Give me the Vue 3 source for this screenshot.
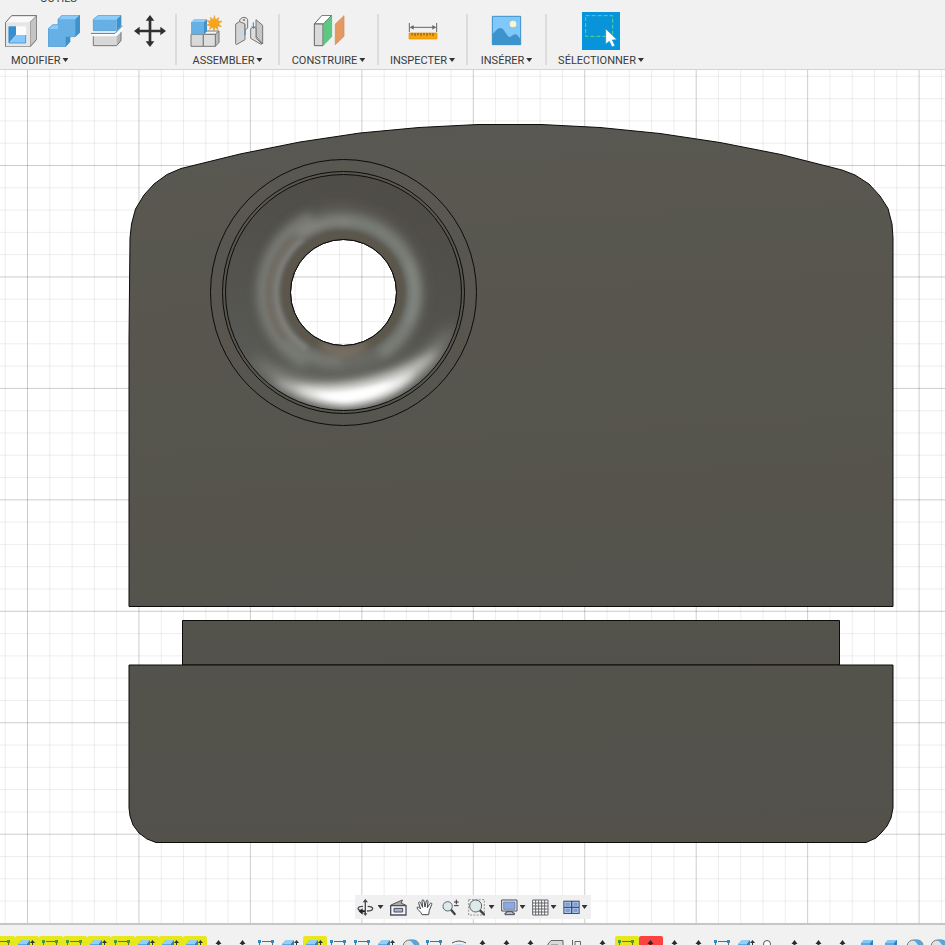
<script setup>
const step = 22.29
const gridX = Array.from({ length: 160 }, (_, i) => {
  const n = i - 60
  return { at: 27.5 + n * step, major: n % 5 === 0 }
})
const gridY = Array.from({ length: 100 }, (_, i) => {
  const n = i - 30
  return { at: 165.5 + n * step, major: n % 5 === 0 }
})

const body =
  'M129 606.500V340L130 238L131.500 224L135.500 209L144 195L154 184L167 174.500L181 168.500L240 154L300 142L360 133L419 127.500L478 124.500H541L600 127.500L660 133.500L720 142.500L781 154.500L842 170L855 175L869 184L880 196L888 208.500L892 224L893 238V606.500Z'
const hole = 'M290.500 292.500a53 53 0 1 0 106 0a53 53 0 1 0 -106 0Z'
const dish = 'M225.500 292.500a118 118 0 1 0 236 0a118 118 0 1 0 -236 0Z'

const y = (kind) => ({ kind, tone: 'warn' })
const p = (kind) => ({ kind, tone: '' })
const history = [
  y('sketch'), y('extrude'), y('sketch'), y('sketch'), y('extrude'), y('sketch'), y('extrude'), y('extrude'), y('extrude'),
  p('move'), p('move'), p('sketch'), p('extrude'), y('extrude'), p('sketch'), p('sketch'), p('extrude'), p('fillet'),
  p('sketch'), p('revolve'), p('move'), p('move'), p('move'), p('shell'), p('align'), p('move'),
  y('sketch'), { kind: 'move', tone: 'error' }, p('move'), p('move'), p('sketch'), p('extrude'), p('joint'), p('move'),
  p('move'), p('move'), p('box'), p('box'), p('fillet'), p('fillet')
]
const names = {
  sketch: 'Esquisse', extrude: 'Extrusion', move: 'Déplacer', fillet: 'Congé', revolve: 'Révolution',
  shell: 'Coque', align: 'Aligner', joint: 'Liaison', box: 'Corps'
}
</script>

<template>
  <div class="app">
    <header class="ribbon">
      <nav class="tabs"><a href="#outils">OUTILS</a></nav>
      <div class="tools">
        <section class="group first">
          <div class="icons">
            <button aria-label="Coque">
              <svg class="ico" viewBox="0 0 96 96">
                <path d="M2 22L20 2H95V73L75 95H2Z" fill="#fafafa" stroke="#666" stroke-width="3" />
                <path d="M75 22L95 2V73L75 95Z" fill="#c4c4c4" stroke="#666" stroke-width="2" />
                <path d="M3 22H75V94H3Z" fill="#e6e6e6" />
                <path d="M11 34H63V85H11Z" fill="#fbfbfb" />
                <path d="M11 34H33V60L11 85Z" fill="#378fcd" />
                <path d="M11 85L33 60H63V85Z" fill="#87c7fb" />
                <path d="M12 35V84H62V60" fill="none" stroke="#3186c4" stroke-width="2" />
              </svg>
            </button>
            <button aria-label="Combiner">
              <svg class="ico" viewBox="0 0 96 96">
                <path d="M0 42L14 29H30V13L43 0H96V52L82 65H66V80L53 95H0Z" fill="#67b0e6" />
                <path d="M0 42L14 29H30V42ZM30 13L43 0H96L82 13Z" fill="#88cbf9" />
                <path d="M82 13L96 0V52L82 65ZM53 65H66V80L53 95Z" fill="#3f91c9" />
                <path d="M0 42L14 29H30V13L43 0H96V52L82 65H66V80L53 95H0Z" fill="none" stroke="#4a96cb" stroke-width="2" />
              </svg>
            </button>
            <button aria-label="Scinder le corps">
              <svg class="ico" viewBox="0 0 96 96">
                <path d="M7 64H77V92H7Z" fill="#d8d8d8" />
                <path d="M77 64L90 50V77L77 92Z" fill="#b4b4b4" />
                <path d="M7 64V92H77L90 77V50" fill="none" stroke="#777" stroke-width="3" />
                <path d="M0 52L6 62H78L96 44V30L72 50Z" fill="#fff" />
                <path d="M7 13L22 1H90L77 13Z" fill="#8bccf8" />
                <path d="M7 13H77V47H7Z" fill="#67b0e6" />
                <path d="M77 13L90 1V33L77 47Z" fill="#3f91c9" />
                <path d="M7 13L22 1H90V33L77 47H7Z" fill="none" stroke="#4191c8" stroke-width="2" />
                <path d="M0 55H72L95 32" fill="none" stroke="#1683cb" stroke-width="3" />
              </svg>
            </button>
            <button aria-label="Déplacer">
              <svg class="ico" viewBox="0 0 96 96">
                <path d="M48 0L61 17H52V44H79V35L96 48L79 61V52H52V79H61L48 96L35 79H44V52H17V61L0 48L17 35V44H44V17H35Z" fill="#303030" />
              </svg>
            </button>
          </div>
          <button class="menu">MODIFIER<i class="caret"></i></button>
        </section>

        <section class="group">
          <div class="icons">
            <button aria-label="Nouveau composant">
              <svg class="ico" viewBox="0 0 96 96">
                <path d="M3 58H40V94H3Z" fill="#d9d9d9" stroke="#777" stroke-width="3" />
                <path d="M40 58L50 48H87L76 58Z" fill="#f7f7f7" stroke="#777" stroke-width="3" />
                <path d="M76 58L87 48V82L76 94Z" fill="#bcbcbc" stroke="#777" stroke-width="3" />
                <path d="M40 58H76V94H40Z" fill="#dedede" stroke="#777" stroke-width="3" />
                <path d="M3 21H42V58H3Z" fill="#67b0e6" />
                <path d="M3 21L13 12H51L42 21Z" fill="#8bccf8" />
                <path d="M42 21L51 12V48L42 58Z" fill="#3f91c9" />
                <path d="M73 1L77 14L87 7L84 18L97 19L86 26L95 35L83 33L84 46L76 37L71 49L68 36L58 44L61 32L48 32L59 25L49 16L62 18L61 6L70 14Z" fill="#f7a41a" stroke="#e39414" stroke-width="1" />
              </svg>
            </button>
            <button aria-label="Liaison">
              <svg class="ico" viewBox="0 0 96 96">
                <path d="M8 27L24 17L36 27V74L10 89L8 86Z" fill="#d4d4d4" stroke="#777" stroke-width="3" />
                <path d="M20 20V15Q24 7 33 7Q42 7 44 14V39L36 45V27Z" fill="#e4e4e4" stroke="#777" stroke-width="3" />
                <circle cx="33" cy="15" r="3" fill="#777" />
                <path d="M36 46V60" stroke="#2b86c4" stroke-width="3" />
                <path d="M89 87V31L69 14V63Z" fill="#c6c6c6" stroke="#777" stroke-width="3" />
                <path d="M53 41Q61 32 69 39V69L87 87L82 87L53 70Z" fill="#dddddd" stroke="#777" stroke-width="3" />
                <path d="M61 22V38M56 34L61 40L66 34" fill="none" stroke="#2b86c4" stroke-width="3" />
              </svg>
            </button>
          </div>
          <button class="menu">ASSEMBLER<i class="caret"></i></button>
        </section>

        <section class="group">
          <div class="icons">
            <button aria-label="Plan décalé">
              <svg class="ico" viewBox="0 0 96 96">
                <path d="M4 27L27 1H56L31 27Z" fill="#fff" stroke="#666" stroke-width="3" />
                <path d="M4 27H30V92H4Z" fill="#dadada" stroke="#666" stroke-width="3" />
                <path d="M31 27L56 3V65L31 91Z" fill="#5cc881" stroke="#43b56c" stroke-width="2" />
                <path d="M67 27L93 2V64L67 89Z" fill="#e69863" stroke="#d68450" stroke-width="2" />
              </svg>
            </button>
          </div>
          <button class="menu">CONSTRUIRE<i class="caret"></i></button>
        </section>

        <section class="group">
          <div class="icons">
            <button aria-label="Mesurer">
              <svg class="ico" viewBox="0 0 96 96">
                <path d="M7 24V51M89 24V51M10 37H86" stroke="#666" stroke-width="3" />
                <path d="M9 37L20 30V44ZM87 37L76 30V44Z" fill="#666" />
                <path d="M6 54H90V72H6Z" fill="#f8a50d" stroke="#de910a" stroke-width="2" />
                <path d="M15 54V61M24 54V63M33 54V61M42 54V63M51 54V61M60 54V63M69 54V61M78 54V63" stroke="#725322" stroke-width="3" />
              </svg>
            </button>
          </div>
          <button class="menu">INSPECTER<i class="caret"></i></button>
        </section>

        <section class="group">
          <div class="icons">
            <button aria-label="Insérer une image">
              <svg class="ico" viewBox="0 0 96 96">
                <path d="M4 4H89V89H4Z" fill="#80c7fb" />
                <path d="M4 58C13 50 19 38 29 39C41 41 45 62 55 66C63 65 67 56 74 58C81 60 84 69 89 72V89H4Z" fill="#3d94cc" />
                <circle cx="66" cy="27" r="10" fill="#fdf6c5" />
                <path d="M4 4H89V89H4Z" fill="none" stroke="#3d91c8" stroke-width="3" />
              </svg>
            </button>
          </div>
          <button class="menu">INSÉRER<i class="caret"></i></button>
        </section>

        <section class="group last">
          <div class="icons">
            <button class="active" aria-label="Sélection par fenêtre">
              <svg class="ico-large" viewBox="0 0 114 114">
                <path d="M11 11H92V73H11Z" fill="none" stroke="#58d68a" stroke-width="3" stroke-dasharray="12 6" />
                <path d="M71 50L105 83L91 84L99 101L90 105L82 88L71 97Z" fill="#fff" stroke="#0794da" stroke-width="2" />
              </svg>
            </button>
          </div>
          <button class="menu">SÉLECTIONNER<i class="caret"></i></button>
        </section>
      </div>
    </header>

    <main class="viewport">
      <svg class="scene" viewBox="0 70 945 853" preserveAspectRatio="xMidYMin slice" role="img" aria-label="Modèle, vue de face">
        <defs>
          <linearGradient id="metal" x1="0" y1="0" x2="0.08" y2="1">
            <stop offset="0" stop-color="#585852" />
            <stop offset="0.16" stop-color="#595750" />
            <stop offset="0.3" stop-color="#57564f" />
            <stop offset="0.5" stop-color="#57554e" />
            <stop offset="0.65" stop-color="#56554e" />
            <stop offset="0.85" stop-color="#55534c" />
            <stop offset="1" stop-color="#54534d" />
          </linearGradient>
          <linearGradient id="metal-low" x1="0" y1="0" x2="0.1" y2="1">
            <stop offset="0" stop-color="#54524c" />
            <stop offset="0.5" stop-color="#53524b" />
            <stop offset="1" stop-color="#54514b" />
          </linearGradient>
          <linearGradient id="dish-base" x1="0.7" y1="0" x2="0.35" y2="1">
            <stop offset="0" stop-color="#4f4c46" />
            <stop offset="0.45" stop-color="#52514c" />
            <stop offset="1" stop-color="#5a5b57" />
          </linearGradient>
          <clipPath id="dish-clip"><path :d="dish + hole" clip-rule="evenodd" /></clipPath>
          <filter id="b2" filterUnits="userSpaceOnUse" x="200" y="150" width="290" height="290"><feGaussianBlur stdDeviation="2" /></filter>
          <filter id="b4" filterUnits="userSpaceOnUse" x="200" y="150" width="290" height="290"><feGaussianBlur stdDeviation="4" /></filter>
          <filter id="b7" filterUnits="userSpaceOnUse" x="200" y="150" width="290" height="290"><feGaussianBlur stdDeviation="7" /></filter>
        </defs>

        <g class="grid">
          <line v-for="g in gridX" :key="'x' + g.at" :class="{ major: g.major }" :x1="g.at" :x2="g.at" y1="-500" y2="2000" />
          <line v-for="g in gridY" :key="'y' + g.at" :class="{ major: g.major }" x1="-1300" x2="2200" :y1="g.at" :y2="g.at" />
        </g>

        <path :d="body + hole" fill="url(#metal)" fill-rule="evenodd" class="edge" />

        <g clip-path="url(#dish-clip)">
          <path :d="dish" fill="url(#dish-base)" />
          <g fill="none">
            <circle cx="341" cy="291" r="73" stroke="#6c6d67" stroke-width="16" filter="url(#b7)" />
            <g filter="url(#b4)">
              <path d="M312 218A81 81 0 0 0 306 363" stroke="#777973" stroke-width="13" />
              <path d="M342 222A71 71 0 0 1 380 354" stroke="#7b7f79" stroke-width="11" />
              <path d="M270 317A76 76 0 0 0 342 361" stroke="#777973" stroke-width="10" />
              <path d="M300 236A70 70 0 0 1 350 222" stroke="#878781" stroke-width="9" />
              <path d="M408 262A71 71 0 0 1 408 322" stroke="#858b85" stroke-width="8" />
            </g>
            <g filter="url(#b2)">
              <path d="M292 238A75 75 0 0 0 285 340" stroke="#716b61" stroke-width="5" />
              <path d="M303 239A67 67 0 0 0 307 349" stroke="#84837d" stroke-width="5" />
              <circle cx="343.5" cy="292.500" r="57" stroke="#5d574c" stroke-width="8" />
            </g>
            <path d="M321 344Q343 356 366 344L359 350Q343 358 328 350Z" fill="#82786b" stroke="#7d7366" stroke-width="6" filter="url(#b4)" />
          </g>
          <path d="M250 355Q300 384 345 383Q410 376 455 322Q436 391 345 408Q280 403 250 355Z" fill="#84847f" filter="url(#b7)" />
          <path d="M272 379Q350 398 440 349Q403 402 345 405Q300 403 272 379Z" fill="#b9b9b6" filter="url(#b4)" />
          <path d="M294 388Q352 397 416 371Q391 401 345 404Q316 402 294 388Z" fill="#ffffff" filter="url(#b4)" />
          <path d="M316 394Q350 395 392 382Q374 398 345 401Q328 400 316 394Z" fill="#ffffff" filter="url(#b2)" />
        </g>
        <g class="outline">
          <circle cx="343.5" cy="292.500" r="133" />
          <circle cx="343.5" cy="292.500" r="121" />
          <circle cx="343.5" cy="292.500" r="118" />
          <circle cx="343.5" cy="292.500" r="53" />
        </g>

        <path d="M182.500 620.500H839.500V665H182.500Z" fill="url(#metal-low)" class="edge" />
        <path d="M129 665H893V808L891 818L887 826L882 832L876 838L866 842.500H156L147 839L139 833L133 825L130 816L129 808Z" fill="url(#metal-low)" class="edge" />
      </svg>

      <nav class="navbar" aria-label="Navigation">
        <button aria-label="Orbite">
          <svg viewBox="0 0 51 51">
            <path d="M25 3V48" stroke="#454850" stroke-width="4" />
            <path d="M25 0L33 10H17ZM25 51L19 43H31Z" fill="#454850" />
            <path d="M15 36C-2 33 0 22 18 22M32 22C54 23 50 36 30 36" fill="none" stroke="#454850" stroke-width="4" />
            <path d="M5 37L17 28V34H24V40H17V47Z" fill="#222" />
          </svg><i class="caret"></i>
        </button>
        <button class="plain" aria-label="Regarder">
          <svg viewBox="0 0 51 51">
            <path d="M3 18L37 3L34 13L47 18" fill="#aaa" stroke="#555" stroke-width="3" />
            <path d="M2 20H48V48H2Z" fill="#f6f6f8" stroke="#4b5060" stroke-width="4" />
            <path d="M12 28H38V39H12Z" fill="#aab1c4" stroke="#4b5060" stroke-width="3" />
          </svg>
        </button>
        <button class="plain" aria-label="Panoramique">
          <svg viewBox="0 0 51 51">
            <path d="M18 47C15 38 5 33 3 27C3 23 8 23 14 30L8 13C7 8 12 7 14 12L20 25L18 6C18 1 23 1 24 6L27 24L31 6C32 2 37 3 36 8L34 26L42 14C45 10 49 13 47 17L40 34L38 47Z" fill="#fff" stroke="#44474e" stroke-width="3" stroke-linejoin="round" />
          </svg>
        </button>
        <button class="plain" aria-label="Zoom">
          <svg viewBox="0 0 51 51">
            <path d="M26 31L38 45" stroke="#3e4147" stroke-width="7" stroke-linecap="round" />
            <circle cx="17" cy="22" r="14" fill="#dceaeb" stroke="#62656b" stroke-width="3" />
            <path d="M36 9H50M43 2V16M36 20H50" stroke="#333" stroke-width="3" />
          </svg>
        </button>
        <button aria-label="Zoom fenêtre">
          <svg viewBox="0 0 51 51">
            <path d="M2 2H49V48H2Z" fill="none" stroke="#666" stroke-width="2" stroke-dasharray="6 4" />
            <path d="M36 34L48 46" stroke="#3e4147" stroke-width="7" stroke-linecap="round" />
            <circle cx="23" cy="21" r="18" fill="#dceaea" stroke="#5f6268" stroke-width="3" />
          </svg><i class="caret"></i>
        </button>
        <button class="tight" aria-label="Paramètres d'affichage">
          <svg viewBox="0 0 51 51">
            <path d="M2 3H48V36H2Z" fill="#eef1f6" stroke="#454b5a" stroke-width="3" />
            <path d="M8 9H42V31H8Z" fill="#8daadf" stroke="#536a9c" stroke-width="2" />
            <path d="M16 38H35V42H40V47H12V42H16Z" fill="#bbc0c8" stroke="#454b5a" stroke-width="3" />
          </svg><i class="caret"></i>
        </button>
        <button class="tight" aria-label="Grille et magnétismes">
          <svg viewBox="0 0 51 51">
            <path d="M2 3H48V48H2Z" fill="#fff" />
            <path d="M2 3H48V48H2ZM11 3V48M20 3V48M29 3V48M38 3V48M2 12H48M2 21H48M2 30H48M2 39H48" fill="none" stroke="#62646a" stroke-width="3" />
          </svg><i class="caret"></i>
        </button>
        <button class="tight" aria-label="Fenêtres">
          <svg viewBox="0 0 51 51">
            <path d="M1 5H50V45H1Z" fill="#42506f" />
            <path d="M4 8H24V23H4ZM28 8H47V23H28ZM4 27H24V42H4ZM28 27H47V42H28Z" fill="#aac4ef" />
            <path d="M9 13H19V19H9ZM33 13H42V19H33ZM9 31H19V37H9ZM33 31H42V37H33Z" fill="#8caee3" stroke="#6c87b9" stroke-width="2" />
          </svg><i class="caret"></i>
        </button>
      </nav>
    </main>

    <footer class="timeline">
      <button v-for="(item, i) in history" :key="i" class="step" :class="item.tone" :aria-label="names[item.kind]">
        <svg viewBox="0 0 24 24">
          <template v-if="item.kind === 'sketch'">
            <path d="M7 5.500H16M4.500 7V17M17.500 7V17M7 18.500H16" stroke="#666" />
            <path d="M3 4h3v3H3zM16 4h3v3h-3zM3 17h3v3H3zM16 17h3v3h-3z" :fill="item.tone ? '#4a9a35' : '#3489bd'" />
          </template>
          <template v-else-if="item.kind === 'extrude'">
            <path d="M3 8L7 4H15L14 8V18H3Z" fill="#5baae2" />
            <path d="M3 8L7 4H15L12 8Z" fill="#93cff6" />
            <path d="M12 8L15 4V15L12 18Z" fill="#3181bd" />
            <path d="M17.500 6V18" stroke="#333" />
            <path d="M17.500 4L20 7H15Z" fill="#333" />
          </template>
          <template v-else-if="item.kind === 'box'">
            <path d="M6 7L9 4H18V16L15 19H6Z" fill="#5baae2" />
            <path d="M6 7L9 4H18L15 7Z" fill="#85c7f4" />
            <path d="M15 7L18 4V16L15 19Z" fill="#3181bd" />
          </template>
          <template v-else-if="item.kind === 'move'">
            <path d="M11.500 4L14.500 8H12.500V11H16V9L20 12L16 15V13H12.500V16H14.500L11.500 20L8.500 16H10.500V13H7V15L3 12L7 9V11H10.500V8H8.500Z" fill="#292929" />
          </template>
          <template v-else-if="item.kind === 'fillet'">
            <path d="M4 18V10Q5 4 11 4H15Q20 5 20 10V17L17 20H4Z" fill="#e2e2e2" stroke="#777" />
            <path d="M10 4H15Q20 5 20 11L16 14Q16 7 10 4Z" fill="#56a5dc" />
          </template>
          <template v-else-if="item.kind === 'revolve'">
            <path d="M4 10Q12 6 20 10V18H4Z" fill="#b8daf2" />
            <path d="M5 7Q12 3 19 7" fill="none" stroke="#555" />
          </template>
          <template v-else-if="item.kind === 'shell'">
            <path d="M5 8L8 4.500H20V15L16 19H5Z" fill="#d8d8d8" stroke="#666" />
            <path d="M8 9H15V16H8Z" fill="#fff" stroke="#777" />
          </template>
          <template v-else-if="item.kind === 'align'">
            <path d="M5.500 4V20M8 5.500H13.500V11H8Z" fill="none" stroke="#666" />
          </template>
          <template v-else>
            <circle cx="8" cy="8" r="3.500" fill="#fff" stroke="#555" />
            <path d="M8 12V20" stroke="#555" />
          </template>
        </svg>
      </button>
    </footer>
  </div>
</template>

<style>
body {
  margin: 0;
  overflow: hidden;
}
</style>

<style scoped>
.app {
  display: flex;
  flex-direction: column;
  height: 100vh;
  overflow: hidden;
  background: #fff;
  font-family: Roboto, "Liberation Sans", sans-serif;
  font-size: 11px;
  line-height: 12px;
  color: #3a3a3a;
}
button {
  display: flex;
  align-items: center;
  margin: 0;
  padding: 0;
  border: 0;
  background: none;
  color: inherit;
  font: inherit;
}
svg {
  display: block;
}
.ribbon {
  flex: none;
  overflow: hidden;
  background: #f1f1f1;
  border-bottom: 1px solid #d4d4d4;
}
.tabs {
  height: 12px;
  margin-top: -7px;
  padding-left: 40px;
}
.tabs a {
  display: block;
  color: inherit;
  text-decoration: none;
}
.tools {
  display: grid;
  grid-template-columns: 177px 103px 99px 89px 79px 108px;
}
.group {
  position: relative;
  display: flex;
  flex-direction: column;
  align-items: center;
  gap: 5px;
  padding: 7px 2px 2px 0;
}
.group::after {
  content: "";
  position: absolute;
  top: 9px;
  right: 0;
  bottom: 4px;
  width: 2px;
  background: #dcdcdc;
}
.group.last {
  padding-right: 0;
}
.group.last::after {
  display: none;
}
.group.first {
  align-items: flex-start;
  padding-left: 5px;
}
.group.first .menu {
  margin-left: 6px;
}
.icons {
  display: flex;
  align-items: center;
  gap: 11px;
  height: 38px;
}
.ico {
  width: 32px;
  height: 32px;
}
.ico-large {
  width: 38px;
  height: 38px;
}
.active {
  background: #0794da;
}
.menu {
  gap: 2px;
  white-space: nowrap;
}
.caret {
  flex: none;
  width: 6px;
  height: 4px;
  background: #333;
  clip-path: polygon(0 0, 100% 0, 50% 100%);
}
.menu .caret {
  margin-bottom: 2px;
}
.viewport {
  position: relative;
  flex: 1;
  min-height: 0;
  overflow: hidden;
}
.scene {
  width: 100%;
  height: 100%;
}
.grid line {
  stroke: #000;
  stroke-opacity: 0.07;
}
.grid line.major {
  stroke-opacity: 0.2;
}
.edge {
  stroke: #0c0c0b;
  stroke-width: 1;
}
.outline {
  fill: none;
  stroke: #0c0c0b;
  stroke-width: 1;
}
.navbar {
  position: absolute;
  bottom: 4px;
  left: 50%;
  transform: translateX(-50%);
  display: flex;
  align-items: center;
  gap: 6px;
  height: 24px;
  padding: 0 3px 0 2px;
  background: #f0f0f0;
}
.navbar button {
  gap: 4px;
}
.navbar .tight {
  gap: 2px;
}
.navbar .plain {
  padding-right: 3px;
}
.navbar svg {
  width: 17px;
  height: 17px;
}
.timeline {
  flex: none;
  display: flex;
  box-sizing: border-box;
  height: 22px;
  padding-top: 11px;
  overflow: hidden;
  background: #f1f1f1;
  border-top: 2px solid #c6c6c6;
}
.step {
  flex: none;
  width: 24px;
  height: 24px;
  border-radius: 2px 2px 0 0;
}
.step:first-child {
  margin-left: -9px;
}
.step svg {
  width: 24px;
  height: 24px;
}
.warn {
  background: #e6e81c;
}
.error {
  background: #fb4340;
}
</style>
